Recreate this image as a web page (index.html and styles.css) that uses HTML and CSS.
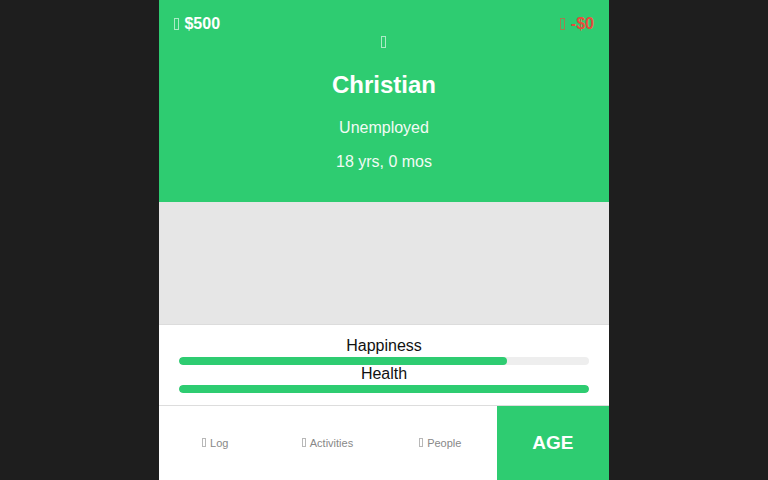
FILE: index.html
```html
<!DOCTYPE html>
<html lang="en">
<head>
    <meta charset="UTF-8">
    <meta name="viewport" content="width=device-width, initial-scale=1.0">
    <title>Life</title>
    <link rel="stylesheet" href="styles.css">
</head>
<body>
    <div class="app">
        <header class="profile">
            <div class="money-row">
                <span class="money"><i class="icon"></i> $500</span>
                <span class="expense"><i class="icon"></i> -$0</span>
            </div>
            <div class="avatar"><i class="icon"></i></div>
            <h1>Christian</h1>
            <p class="job">Unemployed</p>
            <p class="age">18 yrs, 0 mos</p>
        </header>

        <section class="log"></section>

        <section class="stats">
            <div class="stat-label">Happiness</div>
            <div class="bar"><div class="fill" style="width: 80%"></div></div>
            <div class="stat-label">Health</div>
            <div class="bar"><div class="fill" style="width: 100%"></div></div>
        </section>

        <nav class="tabs">
            <a href="#"><span><i class="icon"></i> Log</span></a>
            <a href="#"><span><i class="icon"></i> Activities</span></a>
            <a href="#"><span><i class="icon"></i> People</span></a>
            <a href="#" class="age-button">AGE</a>
        </nav>
    </div>
</body>
</html>
```

FILE: styles.css
```css
body {
    margin: 0;
    background: #1e1e1e;
    font-family: "Liberation Sans", Arial, sans-serif;
}

.app {
    width: 450px;
    height: 480px;
    margin: 0 auto;
    display: flex;
    flex-direction: column;
    background: #fff;
}

/* missing icon font: empty boxes */
.icon {
    display: inline-block;
    width: 3px;
    height: 10px;
    margin-right: 1px;
    border: 1px solid currentColor;
    opacity: 0.6;
    vertical-align: -1px;
}

.profile {
    background: #2ecc71;
    height: 202px;
    box-sizing: border-box;
    padding: 15px 15px 0;
    text-align: center;
    color: #fff;
}

.money-row {
    display: flex;
    justify-content: space-between;
    font-size: 16px;
    font-weight: bold;
    line-height: 18px;
}

.expense {
    color: #e74c3c;
}

.avatar {
    font-size: 14px;
    line-height: 18px;
}

.profile h1 {
    margin: 20px 0 0;
    font-size: 24px;
    line-height: 28px;
}

.profile p {
    margin: 0;
    font-size: 16px;
    line-height: 20px;
    color: #f2fbf5;
}

.job {
    padding-top: 19px;
}

.age {
    padding-top: 14px;
}

.log {
    flex: 1;
    background: #e6e6e6;
    border-bottom: 1px solid #dcdcdc;
}

.stats {
    padding: 12px 20px 12px;
    text-align: center;
}

.stat-label {
    font-size: 16px;
    line-height: 18px;
    color: #111;
}

.bar {
    height: 8px;
    margin-top: 2px;
    background: #eee;
    border-radius: 4px;
    overflow: hidden;
}

.fill {
    height: 100%;
    background: #2ecc71;
    border-radius: 4px;
}

.tabs {
    display: flex;
    height: 74px;
    border-top: 1px solid #ddd;
}

.tabs a {
    flex: 1;
    display: flex;
    align-items: center;
    justify-content: center;
    font-size: 11px;
    color: #888;
    text-decoration: none;
}

.tabs a .icon {
    width: 2px;
    height: 7px;
    vertical-align: 0;
}

.tabs .age-button {
    background: #2ecc71;
    color: #fff;
    font-size: 19px;
    font-weight: bold;
}
```
